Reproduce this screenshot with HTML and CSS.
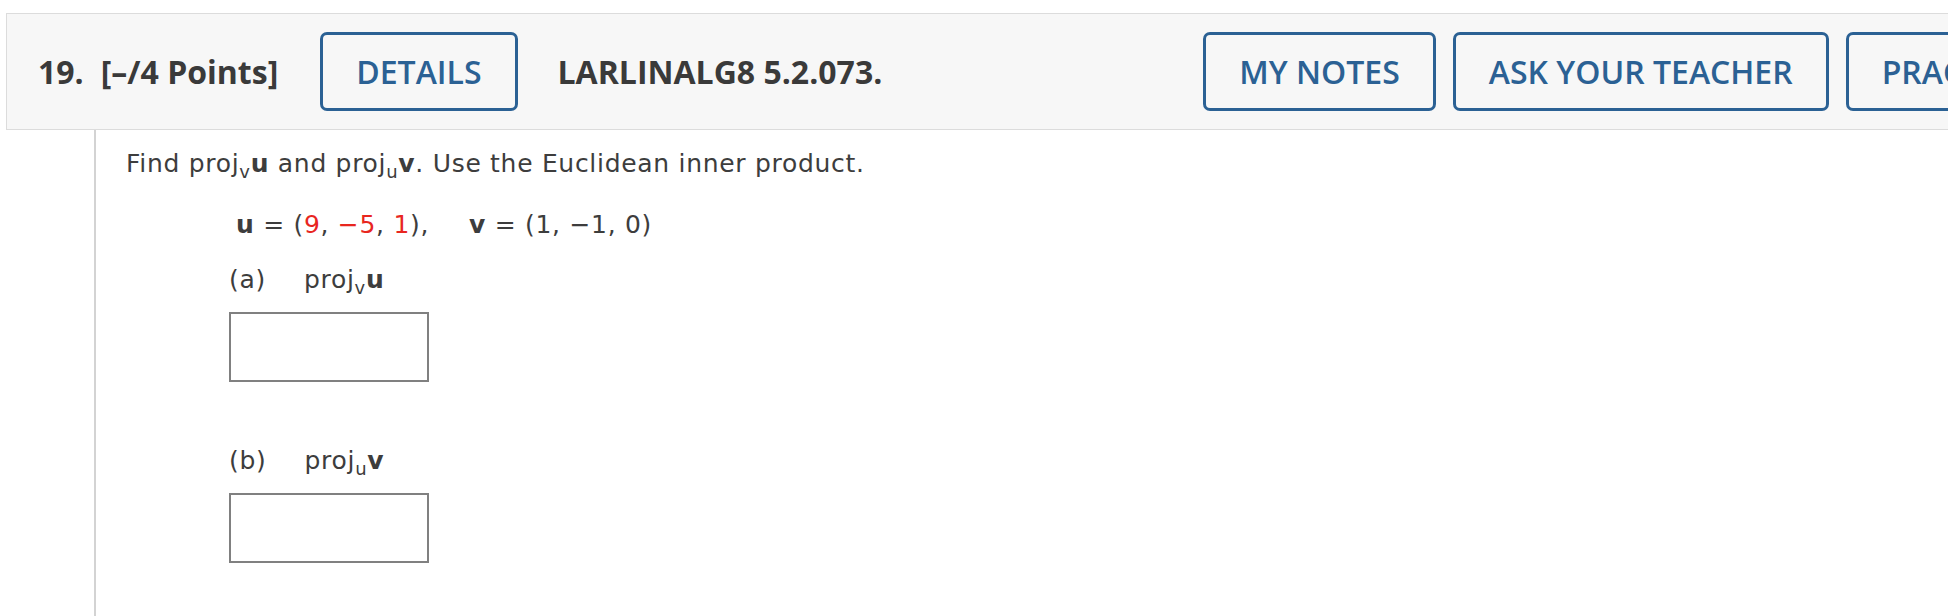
FILE: index.html
```html
<!DOCTYPE html>
<html lang="en">
<head>
<meta charset="utf-8">
<title>Question 19</title>
<link rel="stylesheet" href="styles.css">
</head>
<body>
<div class="page">
  <div class="qheader">
    <span class="qnum">19.</span>
    <span class="qpoints">[–/4 Points]</span>
    <button class="btn btn-details">DETAILS</button>
    <span class="qref">LARLINALG8 5.2.073.</span>
    <div class="spacer"></div>
    <button class="btn">MY NOTES</button>
    <button class="btn">ASK YOUR TEACHER</button>
    <button class="btn">PRACTICE ANOTHER</button>
  </div>
  <div class="qbody">
    <p class="line">Find proj<sub>v</sub><b>u</b> and proj<sub>u</sub><b>v</b>. Use the Euclidean inner product.</p>
    <p class="line vecs"><span class="vec"><b>u</b> = (<span class="red">9</span>, <span class="red">−5</span>, <span class="red">1</span>),</span><span class="vec"><b>v</b> = (1, −1, 0)</span></p>
    <p class="line part"><span class="plabel">(a)</span>proj<sub>v</sub><b>u</b></p>
    <input class="answer" type="text">
    <p class="line part partb"><span class="plabel">(b)</span>proj<sub>u</sub><b>v</b></p>
    <input class="answer" type="text">
  </div>
</div>
</body>
</html>
```
FILE: styles.css
```css
html, body {
  margin: 0;
  padding: 0;
  background: #ffffff;
  overflow: hidden;
}
.page {
  width: 2200px;
  padding-top: 13px;
}
.qheader {
  margin-left: 6px;
  height: 115px;
  border: 1px solid #dcdcdc;
  background: #f7f7f7;
  display: flex;
  align-items: center;
  padding-left: 31px;
  font-family: "Open Sans", "DejaVu Sans", sans-serif;
  color: #3a3a3a;
  font-size: 32px;
  font-weight: 700;
  white-space: nowrap;
}
.qnum {
  margin-right: 17px;
}
.qpoints {
  margin-right: 42px;
}
.qref {
  margin-left: 23px;
}
.spacer {
  width: 321px;
  flex: none;
}
.btn {
  height: 79px;
  box-sizing: border-box;
  border: 3px solid #2b6194;
  border-radius: 7px;
  background: transparent;
  color: #2b6194;
  font-family: "Open Sans", "DejaVu Sans", sans-serif;
  font-size: 32px;
  font-weight: 600;
  padding: 0 33px;
  margin-right: 17px;
  flex: none;
}
.qbody {
  margin-left: 94px;
  border-left: 2px solid #d3d3d3;
  padding: 16px 0 60px 30px;
  font-family: "DejaVu Sans", Verdana, sans-serif;
  font-size: 25px;
  letter-spacing: 0.7px;
  color: #3d3d3d;
}
.line {
  margin: 0;
  line-height: 36px;
}
.line b {
  font-weight: 700;
}
.line sub {
  font-size: 0.72em;
  vertical-align: -0.33em;
  line-height: 0;
}
.vecs {
  margin-top: 25px;
  padding-left: 110px;
}
.vec + .vec {
  margin-left: 40px;
}
.red {
  color: #e8261f;
}
.part {
  margin-top: 19px;
  padding-left: 103px;
}
.partb {
  margin-top: 61px;
}
.plabel {
  margin-right: 38px;
}
.answer {
  display: block;
  margin: 14px 0 0 103px;
  width: 200px;
  height: 70px;
  box-sizing: border-box;
  border: 2px solid #808080;
  background: #ffffff;
  padding: 0;
}
```
